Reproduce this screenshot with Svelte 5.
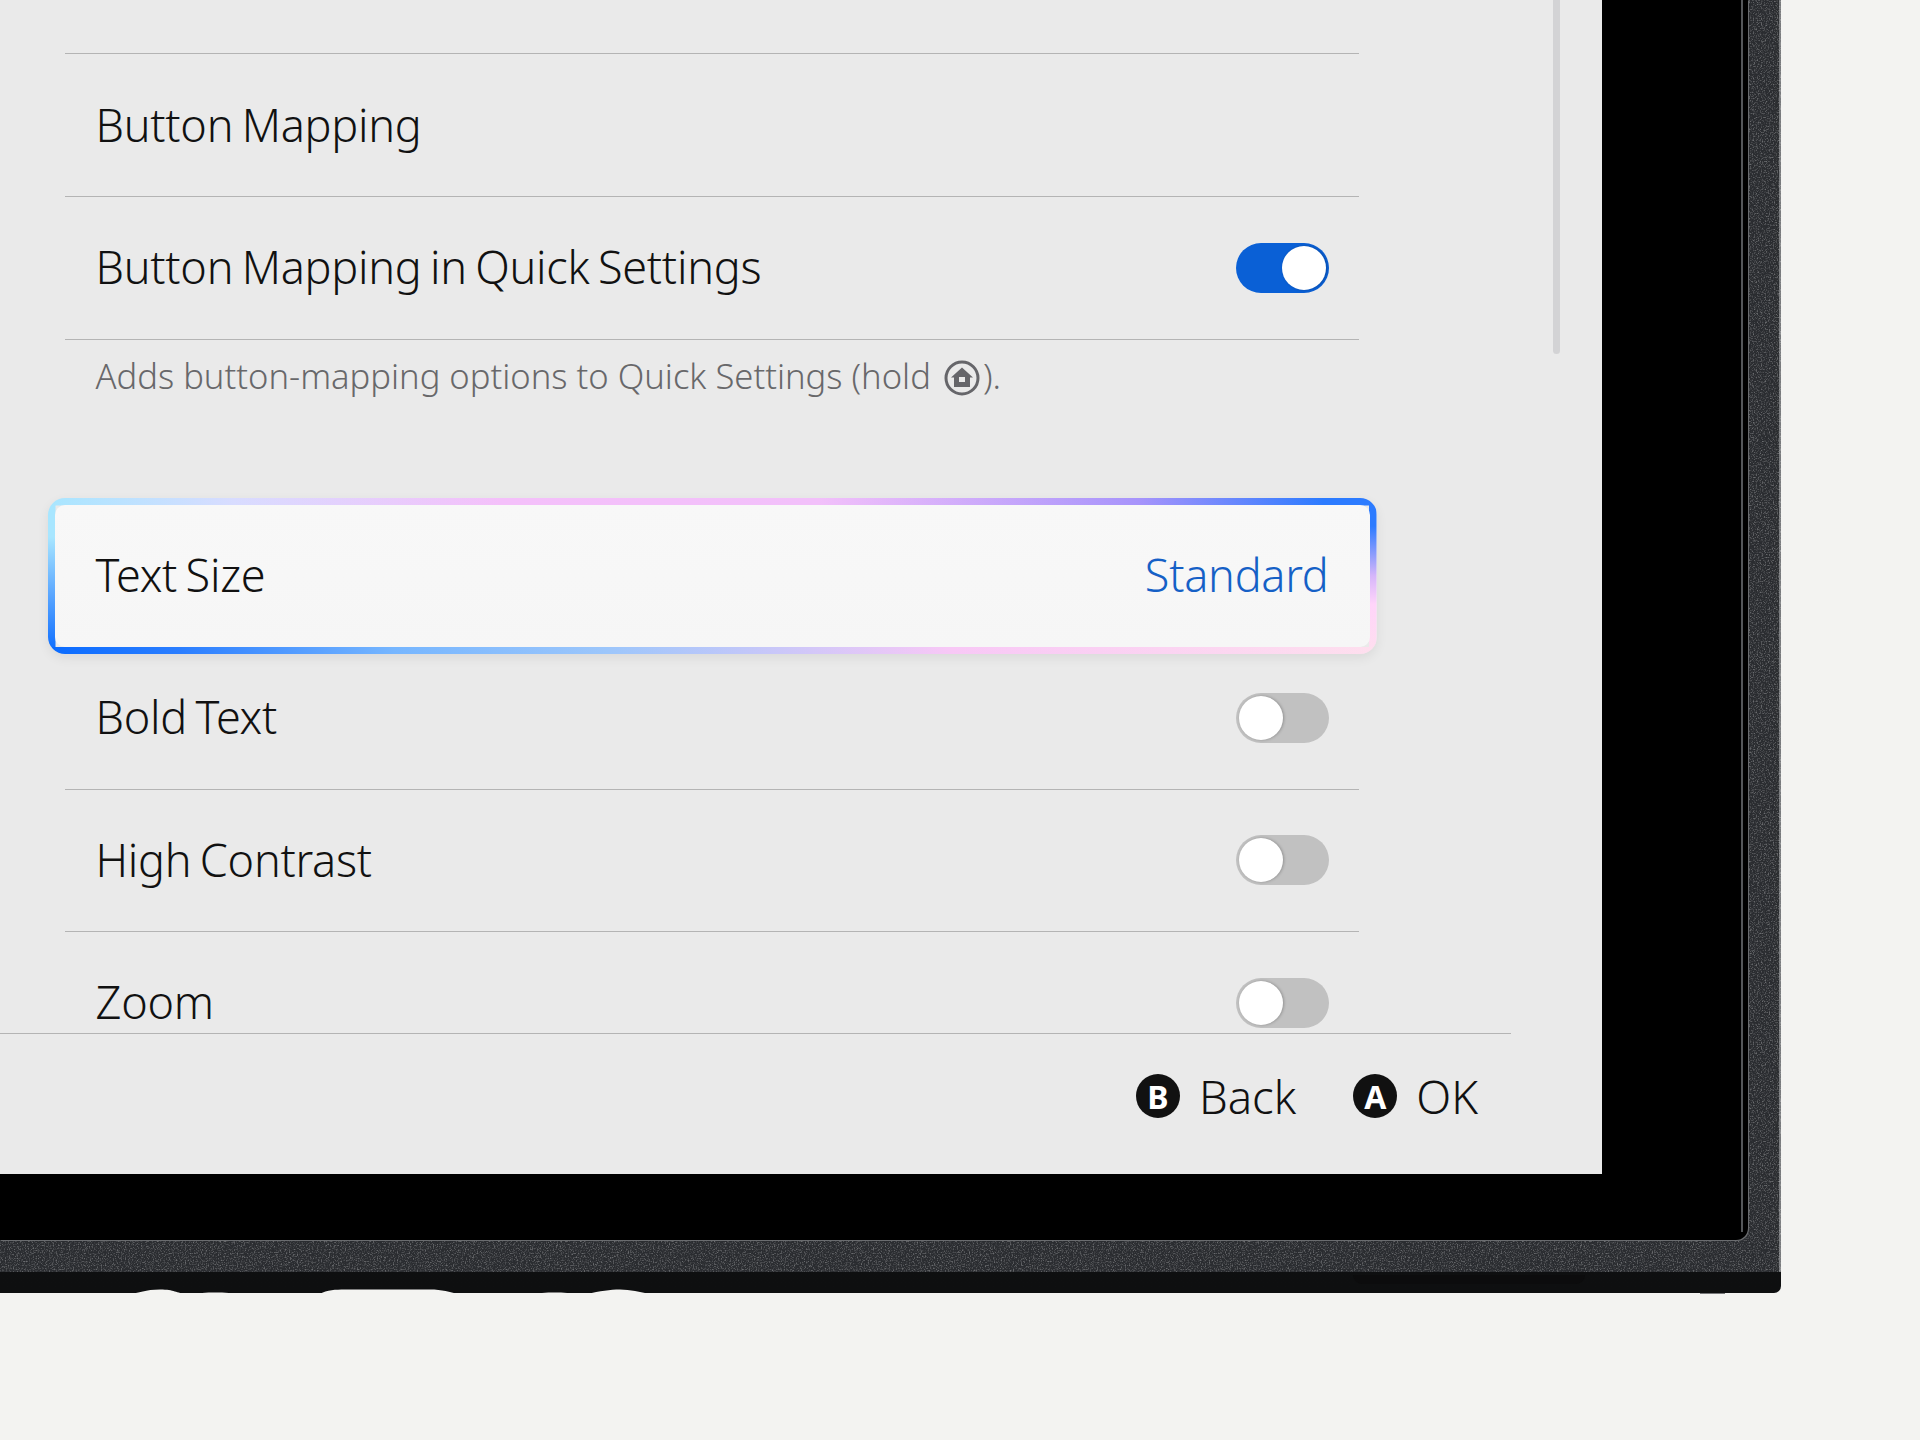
<script lang="ts">
  // Settings screen on a handheld, cropped to its lower-right corner.
  type Row = { label: string; toggle?: boolean; on?: boolean; value?: string; focus?: boolean };

  const top: Row[] = [
    { label: 'Button Mapping' },
    { label: 'Button Mapping in Quick Settings', toggle: true, on: true },
  ];
  const bottom: Row[] = [
    { label: 'Text Size', value: 'Standard', focus: true },
    { label: 'Bold Text', toggle: true },
    { label: 'High Contrast', toggle: true },
    { label: 'Zoom', toggle: true },
  ];
</script>

{#snippet row(r: Row)}
  <div class="row" class:focus={r.focus}>
    <span class="label">{r.label}</span>
    {#if r.toggle}
      <span class="switch" class:on={r.on}><span class="knob"></span></span>
    {/if}
    {#if r.value}
      <span class="label value">{r.value}</span>
    {/if}
  </div>
{/snippet}

<div class="page">
  <div class="device">
    <div class="frame">
      <svg class="grain" aria-hidden="true" width="100%" height="100%">
        <filter id="grain-noise">
          <feTurbulence type="fractalNoise" baseFrequency="0.75" numOctaves="2" seed="4" />
          <feColorMatrix values="0 0 0 0 1  0 0 0 0 1  0 0 0 0 1  3 0 0 0 -1.42" />
        </filter>
        <rect width="100%" height="100%" filter="url(#grain-noise)" />
      </svg>
      <div class="glass">
        <div class="screen">
          <div class="content">
            <div class="scrollbar"></div>
            <div class="list">
              {#each top as r}
                {@render row(r)}
              {/each}
              <p class="help">
                Adds button-mapping options to Quick Settings (hold
                <svg class="home" viewBox="0 0 36 36" aria-hidden="true">
                  <circle cx="18" cy="18" r="16" fill="none" stroke="currentColor" stroke-width="3" />
                  <path fill="currentColor" fill-rule="evenodd" d="M18 7.5 29 17.5h-3V27H10v-9.5H7ZM15 17v5h6v-5Z" />
                </svg>).
              </p>
              {#each bottom as r}
                {@render row(r)}
              {/each}
            </div>
          </div>
          <div class="footer">
            <span class="hint"><span class="btn">B</span>Back</span>
            <span class="hint"><span class="btn">A</span>OK</span>
          </div>
        </div>
      </div>
    </div>
    <div class="notch"></div>
    <div class="nub"></div>
    <svg class="bumps" viewBox="0 0 1781 6" preserveAspectRatio="none" aria-hidden="true">
      <path d="M128 6C140 5 145 1.500 160 1.500S175 5 188 6ZM190 6C205 4 225 4 242 6ZM319 6C328 2 335 1.500 345 1.500H430C442 1.500 450 4 458 6ZM530 6C545 4 565 4 578 6ZM587 6C600 3 610 1.500 620 1.500S640 4 650 6ZM1212 6C1222 4.500 1240 4.500 1250 6Z" />
    </svg>
  </div>
</div>

<style>
  :global(body) {
    background: #f3f3f1;
  }
  .page {
    width: 1920px;
    height: 1440px;
    overflow: hidden;
    background: #f3f3f1;
    font-family: "Noto Sans", "Liberation Sans", sans-serif;
    font-weight: 300;
    color: #111;
  }
  .device {
    position: relative;
    width: 1781px;
    height: 1293px;
    border-bottom-right-radius: 7px;
    background: linear-gradient(#26272a, #111214 60%, #0e0f10);
  }
  .frame {
    position: relative;
    height: 1272px;
    box-sizing: border-box;
    padding: 0 33px 32px 0;
    background: #2a2c30;
    box-shadow: inset -2px 0 0 #77797c, inset -6px 0 0 #2b2d30;
  }
  .grain {
    position: absolute;
    inset: 0;
    opacity: 0.3;
  }
  .glass {
    position: relative;
    height: 1240px;
    background: #000;
    border-bottom-right-radius: 12px;
    box-shadow: 1px 1px 0 #6a6c6f;
  }
  .glass::after {
    content: "";
    position: absolute;
    top: 0;
    right: 5px;
    bottom: 8px;
    width: 2px;
    background: #55575a;
  }
  .screen {
    width: 1602px;
    height: 1174px;
    display: flex;
    flex-direction: column;
    background: #eaeaea;
  }
  .content {
    position: relative;
    height: 1033px;
    overflow: hidden;
  }
  .scrollbar {
    position: absolute;
    top: 0;
    left: 1553px;
    width: 7px;
    height: 354px;
    border-radius: 0 0 4px 4px;
    background: #d3d3d5;
  }
  .list {
    width: 1294px;
    margin-left: 65px;
    padding-top: 53px;
  }
  .row {
    height: 142.5px;
    box-sizing: border-box;
    display: flex;
    align-items: center;
    justify-content: space-between;
    padding: 0 30.5px;
    border-bottom: 1.5px solid #b4b4b4;
    font-size: 45px;
    letter-spacing: -0.25px;
    word-spacing: -3px;
  }
  .label {
    margin-bottom: 2px;
  }
  .list > .row:first-child {
    height: 144px;
    border-top: 1.5px solid #b4b4b4;
  }
  .row.focus {
    height: 156.5px;
    margin: -7px -17.5px;
    padding: 0 41px;
    border: 7.5px solid transparent;
    border-radius: 17px;
    background:
      linear-gradient(#f8f8f8, #f6f6f6) padding-box,
      linear-gradient(90deg, #a8e6ff 0%, #d8dcff 14%, #f4c0fa 34%, #f2c0fa 58%, #a794fb 82%, #2c7bff 96%) top / 100% 7.5px no-repeat border-box,
      linear-gradient(90deg, #0a6bff 0%, #2b7eff 10%, #76b6ff 26%, #9cc6fb 42%, #f8c8f6 68%, #fedfee 100%) bottom / 100% 7.5px no-repeat border-box,
      linear-gradient(#a8e6ff 0%, #a8e6ff 25%, #5aa6ff 62%, #0a6bff 100%) left / 7.5px 100% no-repeat border-box,
      linear-gradient(#2c7bff 0%, #2c7bff 18%, #d6b6fa 50%, #ffd4fa 68%, #fedfee 100%) right / 7.5px 100% no-repeat border-box;
    box-shadow: 0 4px 12px rgba(0, 0, 0, 0.07);
  }
  .value {
    color: #1560c6;
  }
  .switch {
    width: 93px;
    height: 50px;
    flex: none;
    display: flex;
    align-items: center;
    padding: 0 3px;
    box-sizing: border-box;
    border-radius: 25px;
    background: #c1c1c1;
  }
  .switch.on {
    justify-content: flex-end;
    background: #0a60d6;
  }
  .knob {
    width: 44px;
    height: 44px;
    border-radius: 50%;
    background: #fff;
    box-shadow: 1px 0 3px rgba(0, 0, 0, 0.25);
  }
  .help {
    height: 165px;
    margin: 0;
    box-sizing: border-box;
    padding: 12px 30.5px 0;
    font-size: 34.6px;
    line-height: 48px;
    color: #68686a;
  }
  .home {
    width: 36px;
    height: 36px;
    margin: 0 3px 0 4px;
    vertical-align: -7px;
    color: #66666a;
  }
  .footer {
    width: 1511px;
    height: 141px;
    box-sizing: border-box;
    display: flex;
    justify-content: flex-end;
    align-items: center;
    gap: 57px;
    padding: 0 33px 16px 0;
    border-top: 1.5px solid #b4b4b4;
    font-size: 45.5px;
  }
  .hint {
    display: flex;
    align-items: center;
    gap: 19px;
  }
  .btn {
    width: 44px;
    height: 44px;
    display: flex;
    align-items: center;
    justify-content: center;
    border-radius: 50%;
    background: #111;
    color: #fff;
    font-size: 32px;
    font-weight: 700;
  }
  .notch {
    position: absolute;
    left: 1353px;
    top: 1275px;
    width: 232px;
    height: 9px;
    border-radius: 0 0 12px 12px;
    background: #0c0c0d;
  }
  .nub {
    position: absolute;
    left: 1700px;
    top: 1293px;
    width: 25px;
    height: 1px;
    background: #77787a;
  }
  .bumps {
    position: absolute;
    left: 0;
    top: 1288px;
    width: 1781px;
    height: 6px;
    fill: #f3f3f1;
  }
</style>
